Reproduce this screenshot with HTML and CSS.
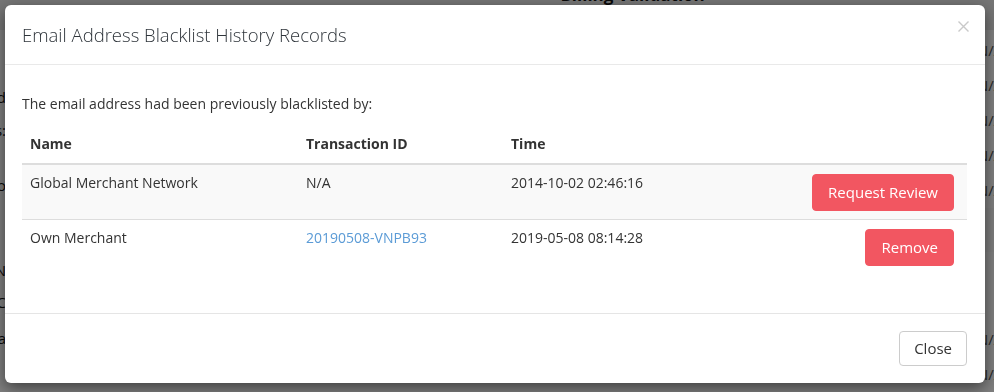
FILE: index.html
```html
<!DOCTYPE html>
<html lang="en">
<head>
  <meta charset="UTF-8">
  <meta name="viewport" content="width=device-width, initial-scale=1">
  <title>Email Address Blacklist History Records</title>
  <link rel="stylesheet" href="styles.css">
</head>
<body>
  <!-- page behind the modal -->
  <div class="page">
    <div class="page-left">
      <div class="frag frag-1"><span>Email Address Blacklisted</span></div>
      <div class="frag frag-2"><span>Status:</span></div>
      <div class="frag frag-3"><span>Billing Info</span></div>
      <div class="frag frag-4"><span>N</span></div>
      <div class="frag frag-5"><span>C</span></div>
      <div class="frag frag-6"><span>ra</span></div>
    </div>
    <div class="page-main">
      <h3 class="page-heading"><span class="page-check">&#10003;</span> Billing Validation</h3>
    </div>
    <div class="page-right">
      <div class="pr-row">N/A</div>
      <div class="pr-row">N/A</div>
      <div class="pr-row">N/A</div>
      <div class="pr-row">N/A</div>
      <div class="pr-row">N/A</div>
      <div class="pr-band"></div>
      <div class="pr-row pr-link">edit</div>
      <div class="pr-row pr-link">edit</div>
      <div class="pr-row">N/A</div>
      <div class="pr-row">N/A</div>
    </div>
  </div>

  <div class="backdrop"></div>

  <div class="modal">
    <div class="modal-content">
      <div class="modal-header">
        <h4 class="modal-title">Email Address Blacklist History Records</h4>
        <button class="close" type="button" aria-label="Close">
          <svg width="11" height="11" viewBox="0 0 11 11">
            <path d="M0.5 0.5 L10.5 10.5 M10.5 0.5 L0.5 10.5" stroke="#c9c9c9" stroke-width="1.4" fill="none"/>
          </svg>
        </button>
      </div>
      <div class="modal-body">
        <p class="intro">The email address had been previously blacklisted by:</p>
        <table class="table">
          <thead>
            <tr>
              <th class="col-name">Name</th>
              <th class="col-txn">Transaction ID</th>
              <th class="col-time">Time</th>
              <th class="col-action"></th>
            </tr>
          </thead>
          <tbody>
            <tr class="striped">
              <td>Global Merchant Network</td>
              <td>N/A</td>
              <td>2014-10-02 02:46:16</td>
              <td class="action"><button class="btn btn-danger" type="button">Request Review</button></td>
            </tr>
            <tr>
              <td>Own Merchant</td>
              <td><a class="txn-link" href="#">20190508-VNPB93</a></td>
              <td>2019-05-08 08:14:28</td>
              <td class="action"><button class="btn btn-danger" type="button">Remove</button></td>
            </tr>
          </tbody>
        </table>
      </div>
      <div class="modal-footer">
        <button class="btn btn-default" type="button">Close</button>
      </div>
    </div>
  </div>
</body>
</html>
```

FILE: styles.css
```css
* {
  box-sizing: border-box;
  margin: 0;
  padding: 0;
}

body {
  font-family: 'Open Sans', 'Liberation Sans', sans-serif;
  font-size: 14px;
  line-height: 20px;
  color: #333;
  background: #fff;
  overflow: hidden;
  height: 392px;
}

/* Page behind the backdrop */
.page {
  display: grid;
  grid-template-columns: 6px 971px 1fr;
  height: 392px;
  border-top: 30px solid #ebebeb;
}

.page-left {
  overflow: hidden;
  padding-top: 57px;
}

.frag {
  display: flex;
  justify-content: flex-end;
  white-space: nowrap;
  color: #111;
  font-size: 15px;
}

.frag-2 { margin-top: 13px; }
.frag-3 { margin-top: 35px; }
.frag-4 { margin-top: 65px; }
.frag-5 { margin-top: 12px; }
.frag-6 { margin-top: 16px; }

.page-main {
  padding-left: 530px;
}

.page-heading {
  font-size: 17px;
  font-weight: 700;
  line-height: 16px;
  margin-top: -43px;
  color: #111;
}

.page-check {
  margin-right: 6px;
}

.page-right {
  overflow: hidden;
  padding-top: 3px;
}

.pr-row {
  height: 35px;
  line-height: 35px;
  white-space: nowrap;
  color: #555;
  font-size: 15px;
}

.pr-link {
  color: #f05050;
  font-weight: 700;
  text-indent: -22px;
}

.pr-band {
  height: 44px;
  background: #fafafa;
}

.backdrop {
  position: fixed;
  inset: 0;
  background: rgba(0, 0, 0, 0.5);
}

/* Modal */
.modal {
  position: fixed;
  top: 5px;
  left: 5px;
  width: 980px;
}

.modal-content {
  background: #fff;
  border-radius: 6px;
  box-shadow: 0 5px 15px rgba(0, 0, 0, 0.5);
}

.modal-header {
  display: flex;
  justify-content: space-between;
  align-items: flex-start;
  padding: 16px 16px 15px 17px;
  border-bottom: 1px solid #e9e9e9;
}

.modal-title {
  font-size: 18.5px;
  font-weight: 300;
  line-height: 28px;
  color: #2f353b;
}

.close {
  background: none;
  border: 0;
  cursor: pointer;
  line-height: 0;
}

.modal-body {
  padding: 29px 18px 15px 17px;
}

.intro {
  margin-bottom: 12px;
}

.table {
  width: 100%;
  border-collapse: collapse;
  table-layout: fixed;
  margin-bottom: 24px;
}

.table th,
.table td {
  text-align: left;
  vertical-align: top;
  padding: 8px;
}

.table th {
  font-weight: 700;
  padding-bottom: 9px;
  border-bottom: 2px solid #dddddd;
}

.table td {
  border-top: 1px solid #dddddd;
}

.table thead + tbody tr:first-child td {
  border-top: 0;
}

.col-name { width: 276px; }
.col-txn { width: 205px; }
.col-time { width: 200px; }

.table tr.striped td {
  background: #f9f9f9;
}

.table td.action {
  text-align: right;
}

.txn-link {
  color: #5b9bd6;
  text-decoration: none;
}

.btn {
  display: inline-block;
  font-family: inherit;
  font-size: 15px;
  line-height: 19px;
  border-radius: 4px;
  cursor: pointer;
}

.btn-danger {
  background: #f25661;
  border: 1px solid #f25661;
  color: #fff;
  padding: 8px 15px;
  margin: 1px 5px 0 0;
}

.btn-default {
  background: #fff;
  border: 1px solid #cccccc;
  color: #333;
  padding: 7px 14px;
}

.modal-footer {
  display: flex;
  justify-content: flex-end;
  padding: 17px 18px 17px 17px;
  border-top: 1px solid #e5e5e5;
}
```
